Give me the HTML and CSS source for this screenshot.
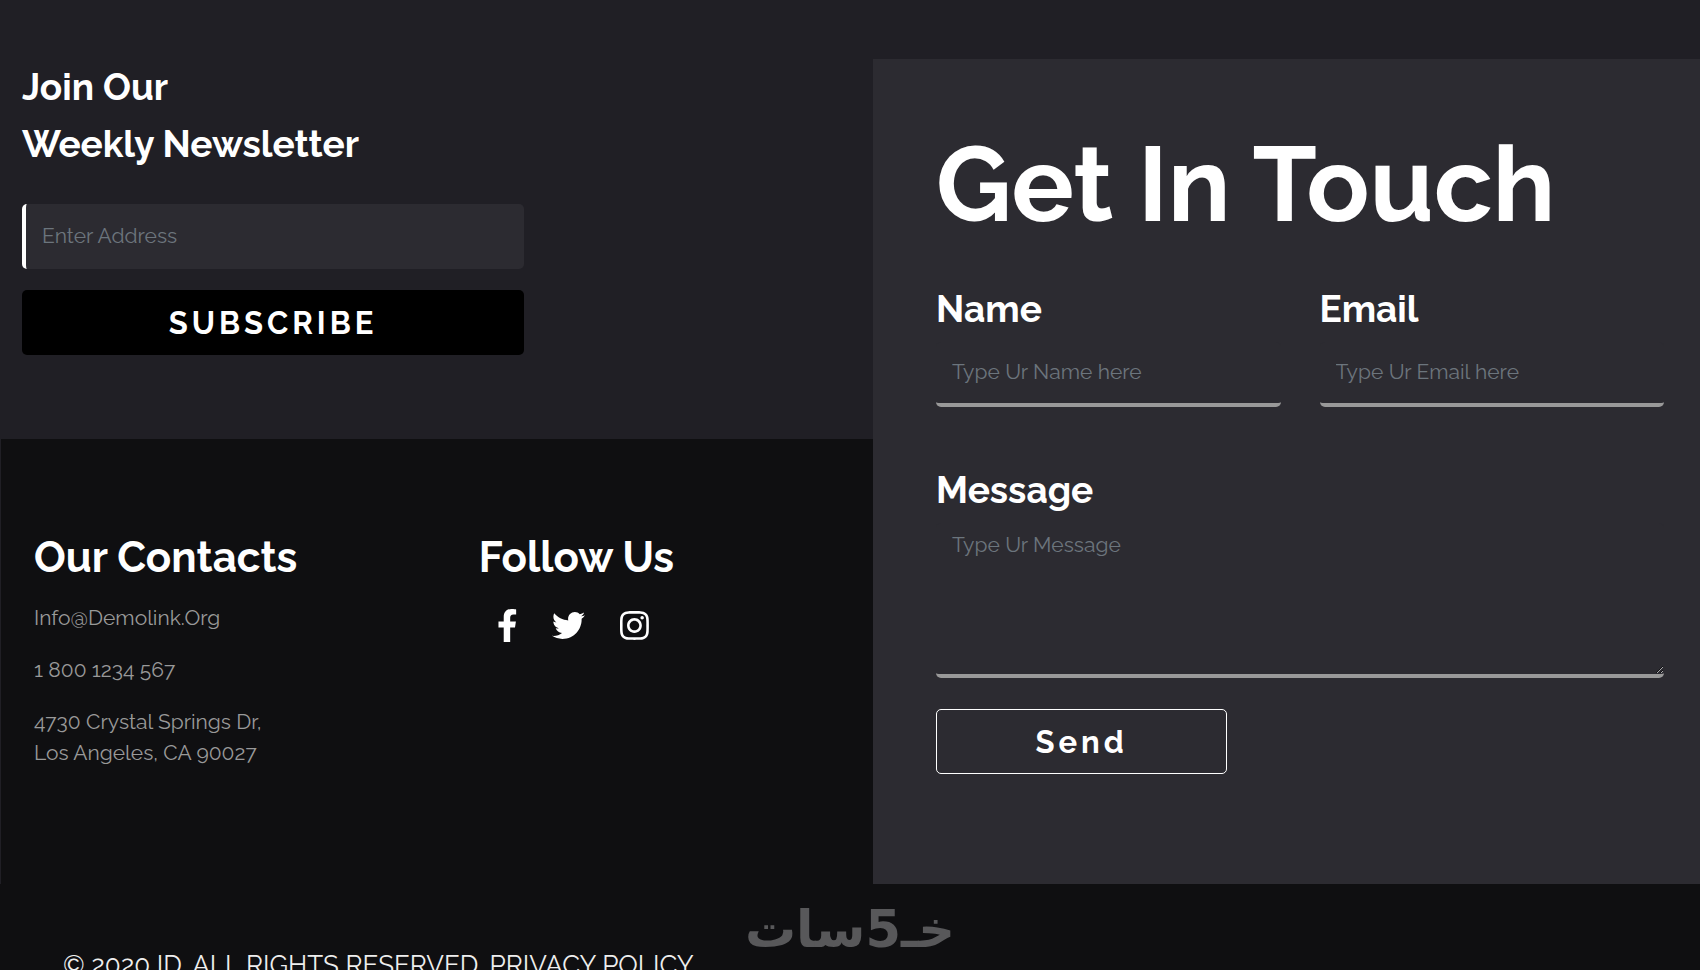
FILE: index.html
```
<!DOCTYPE html>
<html lang="en">
<head>
    <meta charset="UTF-8">
    <meta name="viewport" content="width=device-width, initial-scale=1.0">
    <title>Get In Touch</title>
    <link rel="stylesheet" href="styles.css">
</head>
<body>
    <main class="page">
        <div class="left">
            <!-- Newsletter -->
            <section class="newsletter">
                <h3>Join Our<br>Weekly Newsletter</h3>
                <form class="newsletter-form">
                    <input type="text" class="address" placeholder="Enter Address" aria-label="Enter Address">
                    <button type="button" class="btn btn-subscribe">SUBSCRIBE</button>
                </form>
            </section>

            <!-- Contacts -->
            <section class="contacts">
                <div>
                    <h2>Our Contacts</h2>
                    <p>Info@Demolink.Org</p>
                    <p>1 800 1234 567</p>
                    <p>4730 Crystal Springs Dr,<br>Los Angeles, CA 90027</p>
                </div>
                <div>
                    <h2>Follow Us</h2>
                    <div class="social">
                        <a href="#" aria-label="Facebook">
                            <svg viewBox="0 0 320 512"><path d="M279.14 288l14.22-92.66h-88.91v-60.13c0-25.35 12.42-50.06 52.24-50.06h40.42V6.26S260.43 0 225.36 0c-73.22 0-121.08 44.38-121.08 124.72v70.62H22.89V288h81.39v224h100.17V288z"/></svg>
                        </a>
                        <a href="#" aria-label="Twitter">
                            <svg viewBox="0 0 512 512"><path d="M459.37 151.716c.325 4.548.325 9.097.325 13.645 0 138.72-105.583 298.558-298.558 298.558-59.452 0-114.68-17.219-161.137-47.106 8.447.974 16.568 1.299 25.34 1.299 49.055 0 94.213-16.568 130.274-44.832-46.132-.975-84.792-31.188-98.112-72.772 6.498.974 12.995 1.624 19.818 1.624 9.421 0 18.843-1.3 27.614-3.573-48.081-9.747-84.143-51.98-84.143-102.985v-1.299c13.969 7.797 30.214 12.67 47.431 13.319-28.264-18.843-46.781-51.005-46.781-87.391 0-19.492 5.197-37.36 14.294-52.954 51.655 63.675 129.3 105.258 216.365 109.807-1.624-7.797-2.599-15.918-2.599-24.04 0-57.828 46.782-104.934 104.934-104.934 30.213 0 57.502 12.67 76.67 33.137 23.715-4.548 46.456-13.32 66.599-25.34-7.798 24.366-24.366 44.833-46.132 57.827 21.117-2.273 41.584-8.122 60.426-16.243-14.292 20.791-32.161 39.308-52.628 54.253z"/></svg>
                        </a>
                        <a href="#" aria-label="Instagram">
                            <svg viewBox="0 0 448 512"><path d="M224.1 141c-63.6 0-114.9 51.3-114.9 114.9s51.3 114.9 114.9 114.9S339 319.5 339 255.9 287.7 141 224.1 141zm0 189.6c-41.1 0-74.7-33.5-74.7-74.7s33.5-74.7 74.7-74.7 74.7 33.5 74.7 74.7-33.6 74.7-74.7 74.7zm146.4-194.3c0 14.9-12 26.8-26.8 26.8-14.9 0-26.8-12-26.8-26.8s12-26.8 26.8-26.8 26.8 12 26.8 26.8zm76.1 27.2c-1.7-35.9-9.9-67.7-36.2-93.9-26.2-26.2-58-34.4-93.9-36.2-37-2.1-147.9-2.1-184.9 0-35.8 1.7-67.6 9.9-93.9 36.1s-34.4 58-36.2 93.9c-2.1 37-2.1 147.9 0 184.9 1.7 35.9 9.9 67.7 36.2 93.9s58 34.4 93.9 36.2c37 2.1 147.9 2.1 184.9 0 35.9-1.7 67.7-9.9 93.9-36.2 26.2-26.2 34.4-58 36.2-93.9 2.1-37 2.1-147.8 0-184.8zM398.8 388c-7.8 19.6-22.9 34.7-42.6 42.6-29.5 11.7-99.5 9-132.1 9s-102.7 2.6-132.1-9c-19.6-7.8-34.7-22.9-42.6-42.6-11.7-29.5-9-99.5-9-132.1s-2.6-102.7 9-132.1c7.8-19.6 22.9-34.7 42.6-42.6 29.5-11.7 99.5-9 132.1-9s102.7-2.6 132.1 9c19.6 7.8 34.7 22.9 42.6 42.6 11.7 29.5 9 99.5 9 132.1s2.7 102.7-9 132.1z"/></svg>
                        </a>
                    </div>
                </div>
            </section>
        </div>

        <!-- Contact form -->
        <section class="touch">
            <h1>Get In Touch</h1>
            <form>
                <div class="row">
                    <div class="field">
                        <label for="name">Name</label>
                        <input type="text" id="name" placeholder="Type Ur Name here">
                    </div>
                    <div class="field">
                        <label for="email">Email</label>
                        <input type="email" id="email" placeholder="Type Ur Email here">
                    </div>
                </div>
                <div class="field">
                    <label for="message">Message</label>
                    <textarea id="message" placeholder="Type Ur Message"></textarea>
                </div>
                <button type="button" class="btn btn-send">Send</button>
            </form>
        </section>
    </main>

    <footer class="footer">
        <p>© 2020 ID. ALL RIGHTS RESERVED. PRIVACY POLICY</p>
    </footer>

    <div class="watermark" lang="ar" dir="rtl">خـ5سات</div>
</body>
</html>
```
FILE: styles.css
```
* {
    box-sizing: border-box;
}

body {
    margin: 0;
    height: 100vh;
    overflow: hidden;
    background: #201f25;
    color: #fff;
    font-family: Raleway, Lato, sans-serif;
}

h1, h2, h3, p {
    margin: 0;
}

.page {
    display: grid;
    grid-template-columns: 873fr 827fr;
    padding-top: 59px;
}

.left {
    display: flex;
    flex-direction: column;
}

/* Newsletter */
.newsletter {
    padding: 0 0 84px 22px;
}

.newsletter h3 {
    margin-bottom: 31px;
    font-size: 37px;
    line-height: 57px;
}

.newsletter-form {
    display: flex;
    flex-direction: column;
    gap: 21px;
    width: 59%;
}

input, textarea {
    display: block;
    width: 100%;
    height: 65px;
    padding: 0 16px 2px;
    border: none;
    border-radius: 5px;
    outline: none;
    background: #2c2b31;
    color: #fff;
    font-family: inherit;
    font-size: 21px;
}

input::placeholder, textarea::placeholder {
    color: #6c757d;
    opacity: 1;
}

.address {
    border-left: 4px solid #fff;
}

.btn {
    height: 65px;
    padding: 0;
    border-radius: 5px;
    color: #fff;
    font-family: inherit;
    font-size: 31px;
    font-weight: 700;
    letter-spacing: 4px;
    cursor: pointer;
}

.btn-subscribe {
    border: none;
    background: #000;
}

/* Contacts */
.contacts {
    flex: 1;
    display: grid;
    grid-template-columns: 53fr 47fr;
    margin-left: 1px;
    padding: 93px 0 0 33px;
    background: #0f0f11;
}

.contacts h2 {
    margin-bottom: 18px;
    font-size: 42px;
    line-height: 52px;
}

.contacts p {
    margin-bottom: 21px;
    color: #999;
    font-size: 21px;
    line-height: 31px;
}

.social {
    display: flex;
    gap: 35px;
    padding: 7px 18px;
}

.social svg {
    display: block;
    height: 33px;
    fill: #fff;
}

/* Contact form */
.touch {
    padding: 59px 36px 110px 63px;
    background: #2c2b31;
}

.touch h1 {
    margin-bottom: 35px;
    font-size: 104px;
    line-height: 132px;
}

.row {
    display: grid;
    grid-template-columns: 1fr 1fr;
    gap: 39px;
    margin-bottom: 59px;
}

.field label {
    display: block;
    margin-bottom: 9px;
    font-size: 37px;
    font-weight: 700;
    line-height: 48px;
}

.field input, .field textarea {
    border-bottom: 4px solid #999;
}

.field textarea {
    height: 155px;
    padding-top: 5px;
    line-height: 33px;
    resize: vertical;
}

.btn-send {
    width: 40%;
    margin-top: 31px;
    border: 1px solid #fff;
    background: transparent;
}

/* Footer */
.footer {
    padding: 65px 63px;
    background: #0f0f11;
    color: #eee;
    font-size: 26px;
    line-height: 32px;
}

.watermark {
    position: fixed;
    bottom: 0;
    left: 0;
    right: 0;
    color: #58585a;
    font-family: "DejaVu Sans", sans-serif;
    font-size: 51px;
    font-weight: 700;
    line-height: 80px;
    text-align: center;
    pointer-events: none;
}
```
